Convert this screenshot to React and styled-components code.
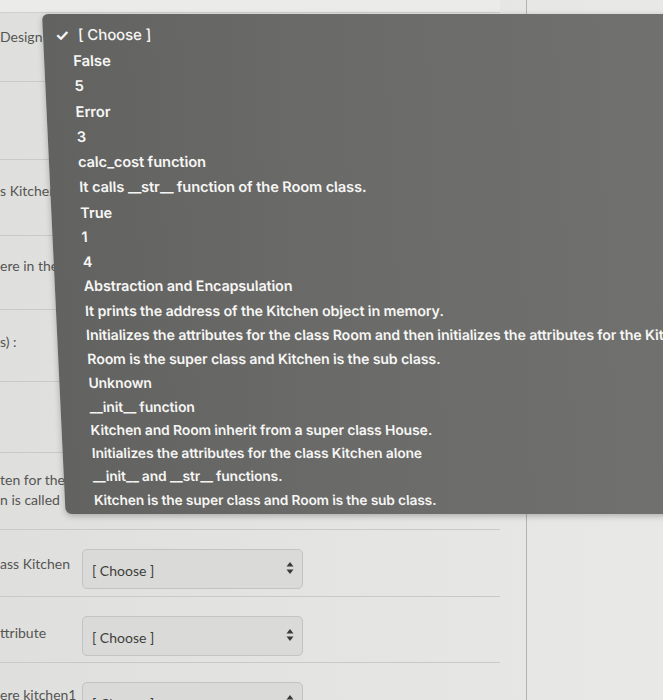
import React from 'react';
import styled, { createGlobalStyle } from 'styled-components';

const GlobalStyle = createGlobalStyle`
  html, body {
    margin: 0;
    padding: 0;
    background: #e3e3e1;
  }
`;

const options = [
  '[ Choose ]',
  'False',
  '5',
  'Error',
  '3',
  'calc_cost function',
  'It calls __str__ function of the Room class.',
  'True',
  '1',
  '4',
  'Abstraction and Encapsulation',
  'It prints the address of the Kitchen object in memory.',
  'Initializes the attributes for the class Room and then initializes the attributes for the Kitchen class.',
  'Room is the super class and Kitchen is the sub class.',
  'Unknown',
  '__init__ function',
  'Kitchen and Room inherit from a super class House.',
  'Initializes the attributes for the class Kitchen alone',
  '__init__ and __str__ functions.',
  'Kitchen is the super class and Room is the sub class.',
];

const rows = [
  { h: 69, label: ['Design'], top: 14 },
  { h: 78, label: [] },
  { h: 76, label: ['s Kitchen'], top: 21 },
  { h: 74, label: ['ere in the'], top: 20 },
  { h: 72, label: ['s) :'], top: 22 },
  { h: 71, label: [] },
  { h: 77, label: ['ten for the', 'n is called'], top: 17 },
  { h: 67, label: ['ass Kitchen'], top: 24, select: true },
  { h: 66, label: ['ttribute'], top: 26, select: true },
  { h: 60, label: ['ere kitchen1'], top: 22, select: true },
];

const Page = styled.div`
  position: relative;
  width: 663px;
  height: 700px;
  overflow: hidden;
  background: linear-gradient(90deg, #dfdfdd 0%, #e5e5e3 60%, #e8e8e6 100%);
  display: flex;
`;

const FormColumn = styled.div`
  width: 526px;
  flex-shrink: 0;
  border-right: 1px solid #b4b4b2;
  display: flex;
  flex-direction: column;
`;

const TopStrip = styled.div`
  height: 12px;
  flex-shrink: 0;
  margin-right: 26px;
  border-bottom: 1px solid #cfcfcd;
  background: #ebebe9;
`;

const Row = styled.div`
  height: ${p => p.$h}px;
  flex-shrink: 0;
  margin-right: 26px;
  border-bottom: 1px solid #c9c9c7;
  display: flex;
  box-sizing: border-box;
`;

const Label = styled.div`
  width: 82px;
  flex-shrink: 0;
  padding-top: ${p => p.$top || 0}px;
  font-family: Lato, "Open Sans", sans-serif;
  font-size: 14px;
  line-height: 20px;
  color: #555553;
  white-space: nowrap;
  overflow: hidden;
`;

const Select = styled.div`
  margin-top: 19px;
  width: 221px;
  height: 40px;
  box-sizing: border-box;
  border: 1px solid #c3c3c1;
  border-radius: 5px;
  background: #dadad8;
  display: flex;
  align-items: center;
  justify-content: space-between;
  padding: 2px 8px 0 9px;
  font-family: Lato, "Open Sans", sans-serif;
  font-size: 14px;
  color: #3e3e3c;
`;

const Arrows = styled.svg`
  width: 8px;
  height: 14px;
  margin-top: -4px;
`;

const Side = styled.div`
  flex: 1;
`;

const Menu = styled.div`
  position: absolute;
  left: 42px;
  top: 14px;
  width: 660px;
  height: 500px;
  box-sizing: border-box;
  padding-top: 8px;
  border-radius: 6px;
  background: linear-gradient(90deg, #626260 0%, #6a6a68 40%, #71716f 100%);
  box-shadow: 0 2px 6px rgba(0, 0, 0, 0.25);
  transform: skewX(2.7deg);
  transform-origin: top left;
`;

const Item = styled.div`
  height: ${p => p.$h}px;
  display: flex;
  align-items: center;
  padding-left: ${p => (p.$first ? 35 : 29)}px;
  font-family: Inter, "Open Sans", sans-serif;
  font-size: ${p => p.$size}px;
  font-weight: 600;
  letter-spacing: -0.1px;
  color: #f6f6f4;
  white-space: nowrap;
  position: relative;
`;

const Check = styled.span`
  position: absolute;
  left: 12px;
  font-size: 16px;
  font-weight: 700;
`;

const ChooseText = styled.span`
  font-weight: 500;
`;

export default function App() {
  return (
    <>
      <GlobalStyle />
      <Page>
        <FormColumn>
          <TopStrip />
          {rows.map((r, i) => (
            <Row key={i} $h={r.h}>
              <Label $top={r.top}>
                {r.label.map((t, j) => (
                  <div key={j}>{t}</div>
                ))}
              </Label>
              {r.select && (
                <Select>
                  <span>[ Choose ]</span>
                  <Arrows viewBox="0 0 8 14">
                    <path d="M4 1 L7.5 5.5 L0.5 5.5 Z" fill="#3a3a38" />
                    <path d="M4 13 L7.5 8.5 L0.5 8.5 Z" fill="#3a3a38" />
                  </Arrows>
                </Select>
              )}
            </Row>
          ))}
        </FormColumn>
        <Side />
        <Menu>
          {options.map((o, i) => (
            <Item
              key={i}
              $first={i === 0}
              $h={25.8 - 0.14 * i}
              $size={15 - 0.07 * i}
            >
              {i === 0 ? (
                <>
                  <Check>✓</Check>
                  <ChooseText>{o}</ChooseText>
                </>
              ) : (
                o
              )}
            </Item>
          ))}
        </Menu>
      </Page>
    </>
  );
}
